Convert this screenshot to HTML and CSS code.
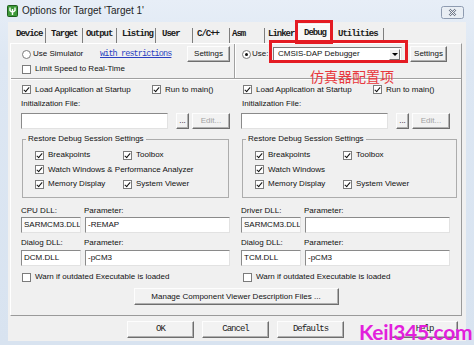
FILE: index.html
```html
<!DOCTYPE html>
<html lang="en">
<head>
<meta charset="utf-8">
<title>Options for Target 'Target 1'</title>
<link rel="stylesheet" href="styles.css">
</head>
<body>
<div class="window">
  <div class="titlebar">
    <svg class="app-icon" width="11" height="12" viewBox="0 0 11 12">
      <rect x="0.5" y="0.5" width="10" height="11" rx="1" fill="#3f9a3a" stroke="#1f5e1f"/>
      <path d="M3 2.5 V5.5 Q5.5 8.5 8 5.5 V2.5 M5.5 4 V10" fill="none" stroke="#fff" stroke-width="1.4"/>
    </svg>
    <span class="title">Options for Target 'Target 1'</span>
    <svg class="close" width="23" height="13" viewBox="0 0 23 13">
      <rect x="0.5" y="0.5" width="22" height="12" rx="2" fill="#e9eef4" stroke="#8e9bb0"/>
      <path d="M8.5 3.5 L14.5 9.5 M14.5 3.5 L8.5 9.5" stroke="#6d7788" stroke-width="2.4"/>
      <path d="M8.5 3.5 L14.5 9.5 M14.5 3.5 L8.5 9.5" stroke="#fff" stroke-width="0.9"/>
    </svg>
  </div>
  <div class="client">
    <div class="tabs">
      <span class="tab t-device">Device</span>
      <span class="tab t-target">Target</span>
      <span class="tab t-output">Output</span>
      <span class="tab t-listing">Listing</span>
      <span class="tab t-user">User</span>
      <span class="tab t-cc">C/C++</span>
      <span class="tab t-asm">Asm</span>
      <span class="tab t-linker">Linker</span>
      <span class="tab t-debug active">Debug</span>
      <span class="tab t-util">Utilities</span>
    </div>
    <div class="panel">
      <div class="top">
        <div class="top-left">
          <div class="row r-head">
            <span class="rb"></span><span class="lbl sim">Use Simulator</span>
            <span class="link">with restrictions</span>
            <span class="btn btn-set">Settings</span>
          </div>
          <div class="row r-line pad1">
            <span class="cb"></span><span class="lbl">Limit Speed to Real-Time</span>
          </div>
        </div>
        <div class="top-right">
          <div class="row r-head">
            <span class="rb on"></span><span class="lbl use">Use:</span>
            <span class="select"><span class="sel-text">CMSIS-DAP Debugger</span><span class="sel-arrow"></span></span>
            <span class="btn btn-set2">Settings</span>
          </div>
        </div>
      </div>
      <div class="hsep"></div>
      <div class="cols">
        <div class="col col-left">
          <div class="row r-load pad1">
            <span class="opt first"><span class="cb on"></span><span class="lbl">Load Application at Startup</span></span>
            <span class="opt"><span class="cb on"></span><span class="lbl">Run to main()</span></span>
          </div>
          <div class="r-label">Initialization File:</div>
          <div class="file-row">
            <span class="input file"></span>
            <span class="btn dots">...</span>
            <span class="btn edit">Edit...</span>
          </div>
          <fieldset class="group">
            <legend>Restore Debug Session Settings</legend>
            <div class="grow">
              <span class="opt first"><span class="cb on"></span><span class="lbl">Breakpoints</span></span>
              <span class="opt"><span class="cb on"></span><span class="lbl">Toolbox</span></span>
            </div>
            <div class="grow mid">
              <span class="opt"><span class="cb on"></span><span class="lbl">Watch Windows &amp; Performance Analyzer</span></span>
            </div>
            <div class="grow">
              <span class="opt first"><span class="cb on"></span><span class="lbl">Memory Display</span></span>
              <span class="opt"><span class="cb on"></span><span class="lbl">System Viewer</span></span>
            </div>
          </fieldset>
          <div class="dll-labels"><span>CPU DLL:</span><span>Parameter:</span></div>
          <div class="dll-inputs"><span class="input ro">SARMCM3.DLL</span><span class="input">-REMAP</span></div>
          <div class="dll-labels second"><span>Dialog DLL:</span><span>Parameter:</span></div>
          <div class="dll-inputs second"><span class="input">DCM.DLL</span><span class="input">-pCM3</span></div>
          <div class="row r-line warn pad1">
            <span class="cb"></span><span class="lbl">Warn if outdated Executable is loaded</span>
          </div>
        </div>
        <div class="col col-right">
          <div class="row r-load pad2">
            <span class="opt first"><span class="cb on"></span><span class="lbl">Load Application at Startup</span></span>
            <span class="opt"><span class="cb on"></span><span class="lbl">Run to main()</span></span>
          </div>
          <div class="r-label pad1">Initialization File:</div>
          <div class="file-row">
            <span class="input file"></span>
            <span class="btn dots">...</span>
            <span class="btn edit">Edit...</span>
          </div>
          <fieldset class="group">
            <legend>Restore Debug Session Settings</legend>
            <div class="grow">
              <span class="opt first"><span class="cb on"></span><span class="lbl">Breakpoints</span></span>
              <span class="opt"><span class="cb on"></span><span class="lbl">Toolbox</span></span>
            </div>
            <div class="grow mid">
              <span class="opt"><span class="cb on"></span><span class="lbl">Watch Windows</span></span>
            </div>
            <div class="grow">
              <span class="opt first"><span class="cb on"></span><span class="lbl">Memory Display</span></span>
              <span class="opt"><span class="cb on"></span><span class="lbl">System Viewer</span></span>
            </div>
          </fieldset>
          <div class="dll-labels"><span>Driver DLL:</span><span>Parameter:</span></div>
          <div class="dll-inputs"><span class="input ro">SARMCM3.DLL</span><span class="input"></span></div>
          <div class="dll-labels second"><span>Dialog DLL:</span><span>Parameter:</span></div>
          <div class="dll-inputs second"><span class="input">TCM.DLL</span><span class="input">-pCM3</span></div>
          <div class="row r-line warn pad2">
            <span class="cb"></span><span class="lbl">Warn if outdated Executable is loaded</span>
          </div>
        </div>
      </div>
      <div class="manage"><span class="btn btn-manage">Manage Component Viewer Description Files ...</span></div>
    </div>
    <div class="actions">
      <span class="btn act">OK</span>
      <span class="btn act">Cancel</span>
      <span class="btn act">Defaults</span>
      <span class="btn act help">Help</span>
    </div>
  </div>

  <div class="mark mark-debug"></div>
  <div class="mark mark-select"></div>
  <div class="note">仿真器配置项</div>
  <div class="keil">Keil345.com</div>
</div>
</body>
</html>
```

FILE: styles.css
```css
* { box-sizing: border-box; margin: 0; padding: 0; }
html, body { width: 474px; height: 358px; overflow: hidden; background: #fff; }
body { font-family: "Liberation Sans", Arial, sans-serif; font-size: 8px; color: #111; line-height: 1; }

.window {
  position: relative;
  width: 474px;
  height: 345px;
  padding-bottom: 4px;
  display: flex;
  flex-direction: column;
  background: linear-gradient(180deg, #e7eef7 0, #dde7f3 60px, #d8e3f0 100%);
}

.titlebar { height: 22px; flex: none; display: flex; align-items: center; padding: 0 10px 0 7px; }
.app-icon { flex: none; margin-right: 4px; }
.title { font-size: 10px; color: #1e1e1e; }
.close { flex: none; margin-left: auto; align-self: flex-start; margin-top: 6px; }

.client { margin: 0 8px; height: 319px; background: #f0f0f0; display: flex; flex-direction: column; }

/* tabs */
.tabs { height: 21px; flex: none; display: flex; align-items: flex-end; padding-left: 4px; }
.tab {
  height: 15px;
  line-height: 13px;
  border-right: 1px solid #7e7e7e;
  font-family: "Liberation Mono", monospace;
  font-weight: bold;
  font-size: 9px;
  letter-spacing: -1px;
  color: #1a1a1a;
  white-space: nowrap;
}
.t-device { width: 34px; padding-left: 4px; }
.t-target { width: 37px; padding-left: 5px; }
.t-output { width: 34px; padding-left: 3px; }
.t-listing { width: 39px; padding-left: 5px; }
.t-user { width: 37px; padding-left: 6px; }
.t-cc { width: 37px; padding-left: 4px; }
.t-asm { width: 35px; padding-left: 2px; }
.t-linker { width: 32px; padding-left: 3px; }
.t-debug { width: 36px; padding-left: 6px; }
.t-util { width: 51px; padding-left: 5px; }
.tab.active {
  height: 19px;
  padding-top: 2px;
  background: #f8f8f8;
  border-top: 1px solid #fff;
  border-left: 1px solid #fff;
  border-right-color: #6a6a6a;
}

/* panel */
.panel {
  margin-left: 2px;
  width: 452px;
  height: 273px;
  flex: none;
  border: 1px solid;
  border-color: #fff #9a9a9a #9a9a9a #fff;
  display: flex;
  flex-direction: column;
}
.top { display: flex; height: 34px; flex: none; }
.top-left { width: 224px; padding: 2px 4px 0 10px; border-right: 1px solid #a0a0a0; }
.top-right { flex: 1; padding: 2px 0 0 6px; border-left: 1px solid #fff; }
.hsep { height: 2px; flex: none; border-top: 1px solid #a0a0a0; border-bottom: 1px solid #fff; }

.row { display: flex; align-items: center; }
.r-head { height: 16px; }
.r-line { height: 14px; }
.pad1 { padding-left: 1px; }
.pad2 { padding-left: 2px; }
.lbl { white-space: nowrap; }
.cb + .lbl { margin-left: 4px; }

.rb {
  width: 9px; height: 9px; flex: none;
  border-radius: 50%;
  border: 1px solid #7b7b7b;
  background: #fff;
  position: relative;
}
.top-left .rb { margin-left: 1px; }
.rb.on::after {
  content: "";
  position: absolute;
  left: 2px; top: 2px;
  width: 3px; height: 3px;
  border-radius: 50%;
  background: #111;
}
.sim { margin-left: 2px; width: 67px; }
.use { margin-left: 1px; width: 21px; }
.link {
  font-family: "Liberation Mono", monospace;
  font-size: 8.5px;
  letter-spacing: -0.9px;
  color: #2a3fc0;
  text-decoration: underline;
  white-space: nowrap;
}

.cb {
  width: 9px; height: 9px; flex: none;
  border: 1px solid #7b7b7b;
  background: #fff;
  position: relative;
}
.cb.on::after {
  content: "";
  position: absolute;
  left: 2px; top: 0;
  width: 2px; height: 5px;
  border: solid #111;
  border-width: 0 1.5px 1.5px 0;
  transform: rotate(40deg);
}

.btn {
  display: inline-flex;
  align-items: center;
  justify-content: center;
  flex: none;
  background: #f2f2f2;
  border: 1px solid;
  border-color: #fdfdfd #6e6e6e #6e6e6e #fdfdfd;
  box-shadow: inset -1px -1px 0 #b0b0b0;
  font-size: 8px;
  color: #111;
  white-space: nowrap;
}
.btn-set { width: 43px; height: 16px; margin-left: auto; }
.btn-set2 { width: 37px; height: 16px; margin-left: 8px; }

.select {
  width: 129px; height: 15px; flex: none;
  display: flex; align-items: center;
  background: #fff;
  border: 1px solid;
  border-color: #7a7a7a #e4e4e4 #e4e4e4 #7a7a7a;
  padding-left: 4px;
}
.sel-text { white-space: nowrap; }
.sel-arrow {
  margin-left: auto;
  margin-right: 1px;
  width: 11px; height: 11px;
  background: #f0f0f0;
  border: 1px solid;
  border-color: #fff #6e6e6e #6e6e6e #fff;
  position: relative;
}
.sel-arrow::after {
  content: "";
  position: absolute;
  left: 2px; top: 3px;
  border-left: 3px solid transparent;
  border-right: 3px solid transparent;
  border-top: 3px solid #000;
}

/* two columns */
.cols {
  display: grid;
  grid-template-columns: 209px 216px;
  column-gap: 11px;
  padding: 2px 0 0 10px;
}
.col { display: flex; flex-direction: column; }
.r-load { height: 15px; }
.opt { display: flex; align-items: center; }
.r-load .opt.first { width: 130px; }
.r-label { height: 14px; line-height: 14px; white-space: nowrap; }

.input {
  display: flex;
  align-items: center;
  background: #fff;
  border: 1px solid;
  border-color: #8a8a8a #e2e2e2 #e2e2e2 #8a8a8a;
  padding-left: 2px;
  white-space: nowrap;
  overflow: hidden;
}
.input.ro { background: #fafafa; }
.file-row { display: flex; margin-top: 2px; height: 16px; width: 209px; }
.file { width: 147px; }
.dots { width: 13px; margin-left: 8px; }
.edit { width: 38px; margin-left: auto; color: #a3a3a3; }

.group {
  margin-top: 4px;
  margin-left: 1px;
  border: 1px solid #acacac;
  padding: 3px 0 6px 12px;
  min-width: 0;
}
.col-left .group { width: 207px; }
.col-right .group { width: 215px; }
.group legend {
  margin-left: -9px;
  padding: 0 2px;
  line-height: 12px;
  font-size: 8px;
}
.grow { display: flex; align-items: center; height: 14px; }
.grow.mid { height: 15px; }
.grow .opt.first { width: 88px; }

.dll-labels {
  display: grid;
  grid-template-columns: 63px 1fr;
  height: 12px;
  line-height: 12px;
  margin-top: 7px;
  white-space: nowrap;
}
.dll-labels.second { margin-top: 4px; }
.dll-inputs {
  display: grid;
  grid-template-columns: 60px 1fr;
  column-gap: 4px;
  width: 209px;
  height: 16px;
}
.dll-inputs.second { margin-top: 1px; }
.warn { margin-top: 4px; }

.manage { display: flex; justify-content: center; margin-top: 4px; }
.btn-manage { width: 205px; height: 17px; }

.actions { display: flex; flex: none; margin-top: 5px; padding-left: 119px; }
.act {
  width: 67px; height: 17px;
  margin-right: 8px;
  font-family: "Liberation Mono", monospace;
  font-size: 9px;
  letter-spacing: -1px;
  color: #222;
}
.act.help { margin-left: 39px; margin-right: 0; }

/* annotations drawn over the screenshot */
.mark { position: absolute; border: 3px solid #e41b23; }
.mark-debug { left: 295px; top: 20px; width: 38px; height: 24px; }
.mark-select { left: 269px; top: 40px; width: 139px; height: 23px; }
.note {
  position: absolute;
  left: 310px; top: 69px;
  font-family: "Noto Sans CJK SC", sans-serif;
  font-size: 14px;
  line-height: 15px;
  color: #e8383d;
  white-space: nowrap;
}
.keil {
  position: absolute;
  left: 359px; top: 320px;
  font-family: Lato, "Liberation Sans", sans-serif;
  font-weight: bold;
  font-size: 21px;
  line-height: 24px;
  letter-spacing: -0.3px;
  color: #e21fdc;
  white-space: nowrap;
}
```
